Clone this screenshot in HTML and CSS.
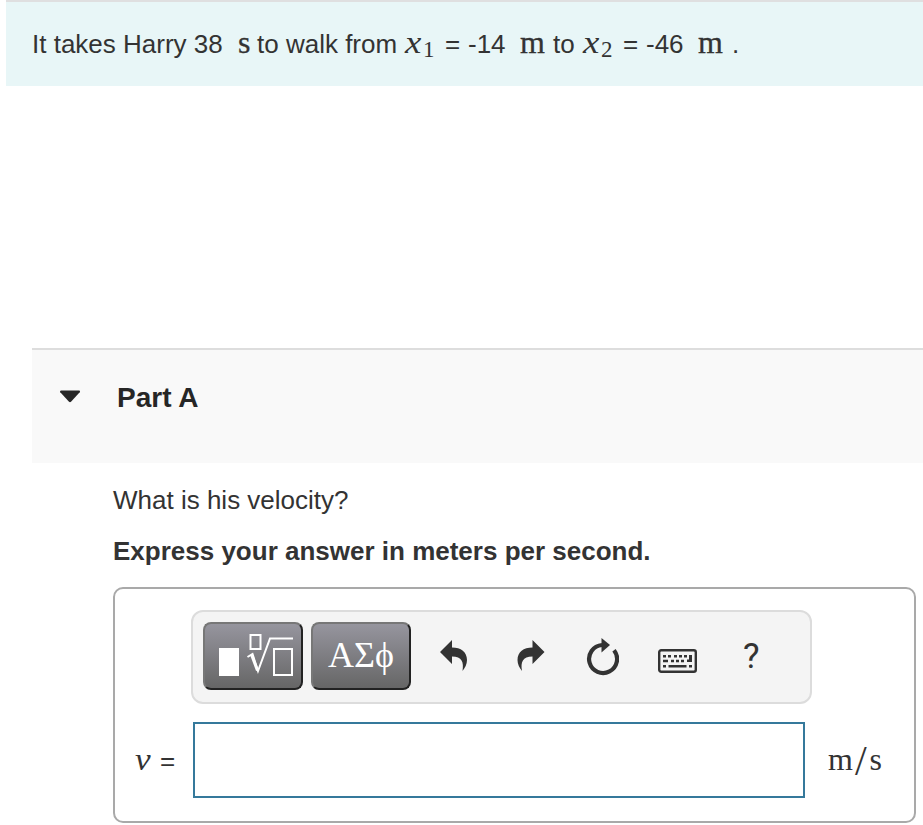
FILE: index.html
```html
<!DOCTYPE html>
<html lang="en">
<head>
  <meta charset="UTF-8">
  <meta name="viewport" content="width=device-width, initial-scale=1">
  <title>Part A</title>
  <link rel="stylesheet" href="styles.css">
</head>
<body>
  <div class="intro">
    <span class="lead">It takes Harry 38</span>
    <span class="unit unit-s">s</span>
    <span class="walk">to walk from</span>
    <span class="var"><i>x</i><sub>1</sub></span>
    <span class="eq">=</span>
    <span class="num">-14</span>
    <span class="unit">m</span>
    <span class="to">to</span>
    <span class="var"><i>x</i><sub>2</sub></span>
    <span class="eq">=</span>
    <span class="num">-46</span>
    <span class="unit">m</span>
    <span class="dot">.</span>
  </div>

  <section class="part">
    <header class="part-header">
      <svg class="caret" width="22" height="13" viewBox="0 0 22 13"><path d="M1.8 .5h18.6q1.2.7.3 1.7L12 11.7q-1 .9-2 0L1.3 2.2Q.4 1.2 1.8.5z"/></svg>
      <h2>Part A</h2>
    </header>

    <div class="question">
      <p class="prompt">What is his velocity?</p>
      <p class="instructions">Express your answer in meters per second.</p>

      <div class="answer">
        <div class="toolbar">
          <button class="palette" aria-label="Templates">
            <svg width="100" height="68" viewBox="0 0 100 68" fill="none" stroke="#fff">
              <rect x="16" y="26" width="20" height="28" fill="#fff" stroke="none"/>
              <rect x="47.5" y="13" width="10" height="14" stroke-width="2"/>
              <path d="M44.5 35l5-3 5.500 17 12-32.500h23" stroke-width="2"/>
              <path d="M48.500 32.500l6 16" stroke-width="3"/>
              <rect x="71" y="27" width="18" height="26" stroke-width="2"/>
            </svg>
          </button>
          <button class="palette greek">ΑΣϕ</button>
          <button class="tool undo" aria-label="Undo">
            <svg width="28" height="32" viewBox="0 0 28 32"><path d="M0 12L12 0v7.500c9 0 15 4.500 15 12.500 0 4-2 8-4.500 11C24 22 22 16.500 12 16.500V24z"/></svg>
          </button>
          <button class="tool redo" aria-label="Redo">
            <svg width="28" height="32" viewBox="0 0 28 32"><path d="M27.500 12L15.500 0v7.500C6.500 7.500 .5 12 .5 20c0 4 2 8 4.500 11C3.500 22 5.500 16.500 15.500 16.500V24z"/></svg>
          </button>
          <button class="tool reset" aria-label="Reset">
            <svg width="33" height="38" viewBox="0 0 33 38"><path d="M28 12.200A14 14 0 1 1 16 7" fill="none" stroke="#333" stroke-width="4.200"/><path d="M15.500 0l8.500 7-8.500 7.500z"/></svg>
          </button>
          <button class="tool keys" aria-label="Keyboard shortcuts">
            <svg width="39" height="25" viewBox="0 0 39 25"><rect x="1.200" y="1.200" width="36.600" height="21.600" rx="2" fill="none" stroke="#333" stroke-width="2.400"/><path d="M5 6h3v2.500H5zM10 6h3v2.500h-3zM16 6h3v2.500h-3zM21 6h3v2.500h-3zM26 6h3v2.500h-3zM31 6h3v7h-5v-2.500h2zM5 10.700h5v2.500H5zM13 10.700h3v2.500h-3zM18 10.700h3v2.500h-3zM23 10.700h3v2.500h-3zM5 16h3v2.500H5zM10.500 16h18v2.500h-18zM31 16h3v2.500h-3z"/></svg>
          </button>
          <button class="tool help">?</button>
        </div>
        <div class="field-row">
          <label for="velocity"><i>v</i><span>=</span></label>
          <input type="text" id="velocity">
          <span class="field-unit">m<span class="slash">/</span>s</span>
        </div>
      </div>
    </div>
  </section>
</body>
</html>
```
FILE: styles.css
```css
* {
  box-sizing: border-box;
}
body {
  margin: 0;
  background: #fff;
  color: #333;
  font-family: "Liberation Sans", Arial, sans-serif;
  font-size: 26px;
  line-height: 30px;
  overflow: hidden;
}
.intro {
  display: flex;
  align-items: baseline;
  height: 86px;
  margin-left: 6px;
  padding: 25px 0 0 26px;
  background: #e8f6f7;
  border-top: 2px solid #dfdfe0;
  white-space: nowrap;
}
.unit, .var {
  font-family: "Liberation Serif", "Times New Roman", serif;
  font-size: 32px;
}
.unit {
  -webkit-text-stroke: 0.3px #333;
}
.lead {
  width: 206px;
}
.unit {
  width: 33px;
}
.unit-s {
  width: 19px;
}
.walk {
  width: 148px;
}
.var {
  width: 40px;
}
.var i {
  display: inline-block;
  width: 18px;
  transform: scaleX(1.15);
  transform-origin: 0 0;
}
.var sub {
  font-size: 23px;
  line-height: 0;
  vertical-align: -4px;
}
.eq {
  width: 23px;
}
.num {
  width: 52px;
}
.to {
  width: 30px;
}
.dot {
  padding-left: 1px;
}
.part {
  margin: 262px 0 0 32px;
}
.part-header {
  display: flex;
  align-items: flex-start;
  height: 115px;
  padding: 32px 0 0 27px;
  background: #f9f9f9;
  border-top: 2px solid #ddd;
}
.caret {
  margin-top: 8px;
  fill: #262626;
}
h2 {
  margin: 0 0 0 36px;
  color: #262626;
  font-size: 28px;
  line-height: 32px;
}
.question {
  width: 803px;
  margin-left: 81px;
  padding-top: 22px;
}
.question p {
  margin: 0;
}
.question .instructions {
  margin: 21px 0;
  font-weight: bold;
}
.answer {
  height: 236px;
  padding: 21px 0 0 76px;
  border: 2px solid #a9a9a9;
  border-radius: 10px;
}
.toolbar {
  display: flex;
  width: 621px;
  height: 94px;
  padding: 10px;
  background: #f4f4f4;
  border: 2px solid #dcdcdc;
  border-radius: 12px;
}
button {
  padding: 0;
  color: #333;
  font-family: inherit;
  cursor: pointer;
}
button svg {
  display: block;
  fill: #333;
}
.palette {
  width: 100px;
  height: 68px;
  margin-right: 8px;
  background: linear-gradient(#96959e, #666);
  border: 2px solid;
  border-color: #777 #222 #222 #777;
  border-radius: 8px;
}
.palette svg {
  margin: -2px;
  fill: none;
}
.greek {
  padding-bottom: 3px;
  color: #fff;
  font-family: "Liberation Serif", serif;
  font-size: 36px;
}
.tool {
  display: flex;
  align-items: flex-start;
  background: none;
  border: 0;
}
.undo {
  margin: 18px 0 0 21px;
}
.redo {
  margin: 18px 0 0 49px;
}
.reset {
  margin: 16px 0 0 41px;
}
.keys {
  margin: 27px 0 0 39px;
}
.help {
  margin: 17px 0 0 46px;
  font-family: Roboto, sans-serif;
  font-size: 35px;
  line-height: 36px;
}
.field-row {
  display: flex;
  margin: 18px 0 0 -76px;
}
label {
  width: 78px;
  padding: 22px 0 0 20px;
  white-space: nowrap;
}
label i {
  display: inline-block;
  width: 25px;
  font-family: "Liberation Serif", serif;
  font-size: 32px;
  transform: scaleX(1.1);
  transform-origin: 0 0;
}
input {
  width: 612px;
  height: 76px;
  background: #fff;
  border: 2px solid #35799b;
  outline: 0;
  font: inherit;
}
.field-unit {
  padding: 22px 0 0 23px;
  font-family: "Liberation Serif", serif;
  font-size: 32px;
}
.slash {
  display: inline-block;
  margin: 0 3px 0 2px;
  font-size: 42px;
  line-height: 0;
  vertical-align: -5px;
}
```
